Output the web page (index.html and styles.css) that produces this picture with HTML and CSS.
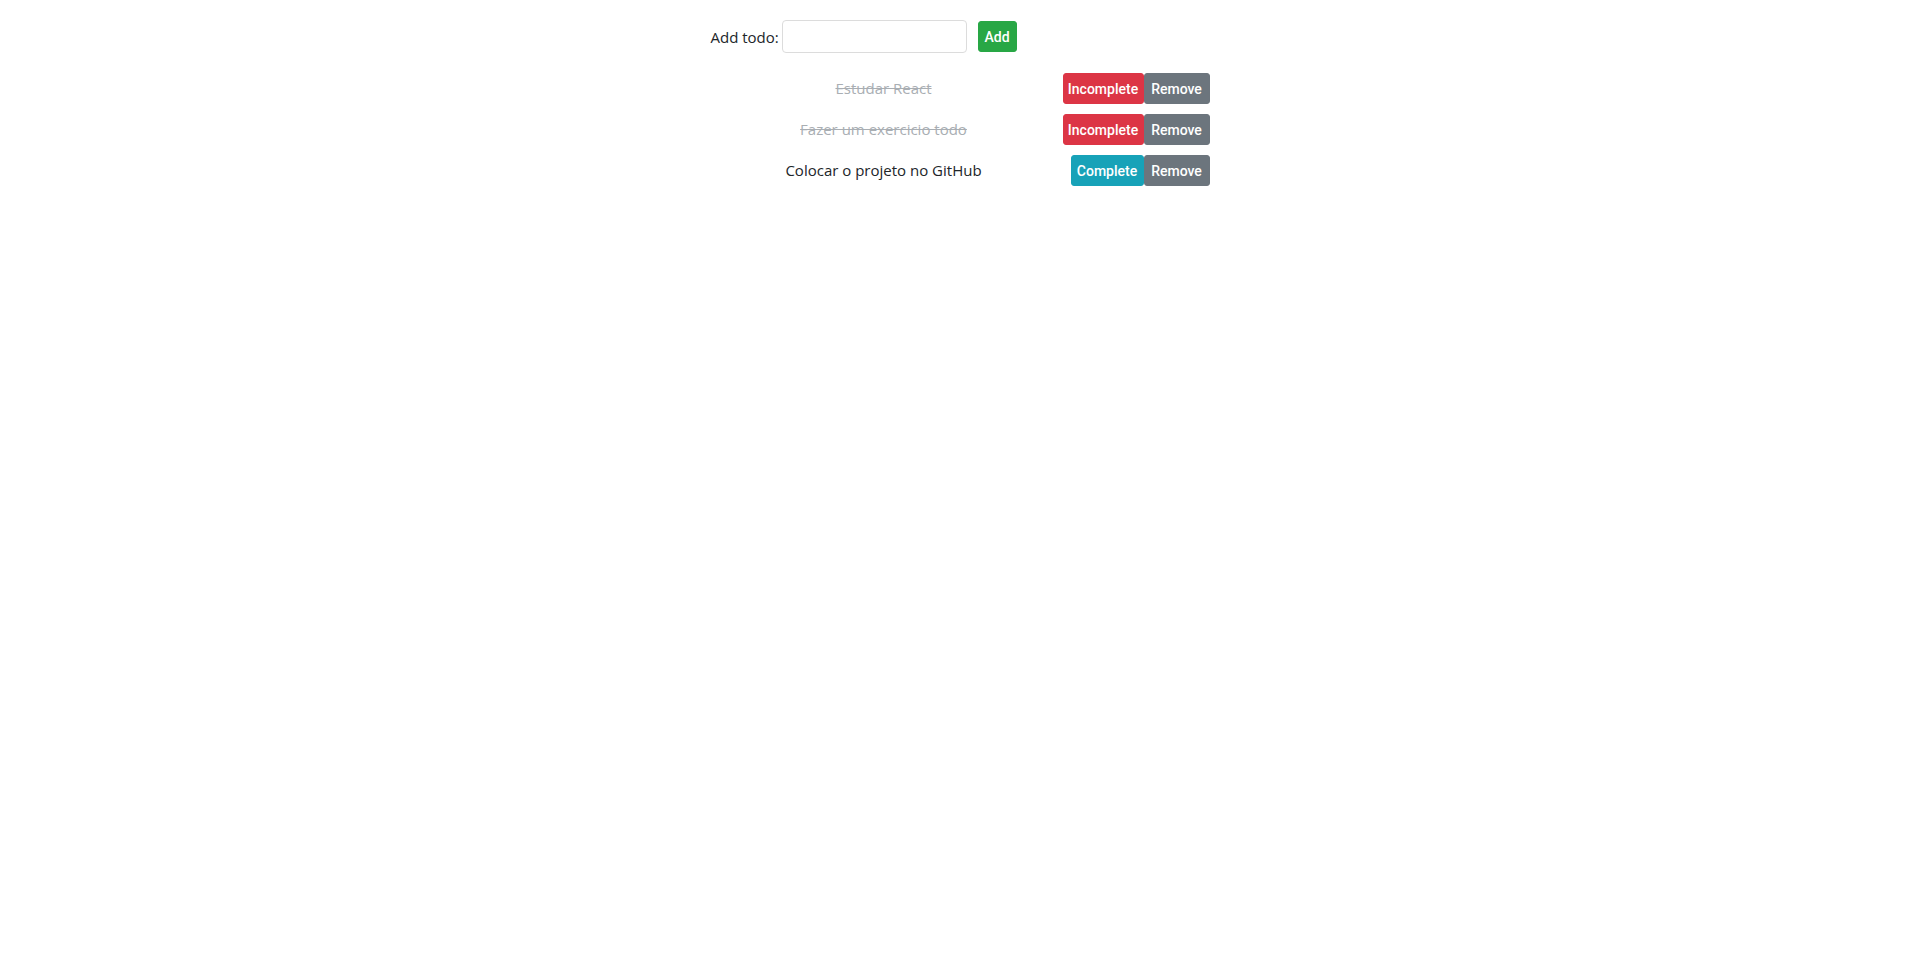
FILE: index.html
```html
<!DOCTYPE html>
<html lang="pt">
<head>
<meta charset="utf-8">
<title>Todo</title>
<link rel="stylesheet" href="styles.css">
</head>
<body>
<div class="app">
  <form class="add-form">
    <label class="add-label" for="todo">Add todo:</label>
    <input class="add-input" id="todo" type="text">
    <button type="button" class="btn btn-success add-btn">Add</button>
  </form>
  <div class="todo-list">
    <div class="todo-row">
      <span class="todo-text done">Estudar React</span>
      <div class="todo-actions">
        <button type="button" class="btn btn-danger">Incomplete</button>
        <button type="button" class="btn btn-secondary">Remove</button>
      </div>
    </div>
    <div class="todo-row">
      <span class="todo-text done">Fazer um exercicio todo</span>
      <div class="todo-actions">
        <button type="button" class="btn btn-danger">Incomplete</button>
        <button type="button" class="btn btn-secondary">Remove</button>
      </div>
    </div>
    <div class="todo-row">
      <span class="todo-text">Colocar o projeto no GitHub</span>
      <div class="todo-actions">
        <button type="button" class="btn btn-info">Complete</button>
        <button type="button" class="btn btn-secondary">Remove</button>
      </div>
    </div>
  </div>
</div>
</body>
</html>
```
FILE: styles.css
```css
html, body {
  margin: 0;
  padding: 0;
  background: #fff;
}
body {
  font-family: "Open Sans", "Noto Sans", sans-serif;
  font-size: 15px;
  color: #212529;
}
.app {
  width: 499px;
  margin: 0 auto;
  padding-top: 20px;
}
.add-form {
  display: flex;
  align-items: center;
  margin: 0;
}
.add-label {
  width: 71px;
  white-space: nowrap;
}
.add-input {
  box-sizing: border-box;
  width: 185px;
  height: 33px;
  margin: 0 11px 0 0;
  border: 1px solid #dcdcdc;
  border-radius: 4px;
  padding: 0 8px;
  font: inherit;
  outline: none;
}
.btn {
  box-sizing: border-box;
  height: 31px;
  margin: 0;
  padding: 0;
  border: 1px solid transparent;
  border-radius: 3px;
  font-family: Roboto, "Liberation Sans", sans-serif;
  font-size: 14px;
  font-weight: 500;
  color: #fff;
  cursor: pointer;
}
.btn-success { background: #28a745; border-color: #28a745; }
.btn-danger { background: #dc3545; border-color: #dc3545; }
.btn-secondary { background: #6c757d; border-color: #6c757d; }
.btn-info { background: #17a2b8; border-color: #17a2b8; }
.add-btn { width: 39px; }
.todo-list {
  display: flex;
  flex-direction: column;
  gap: 10px;
  margin-top: 20px;
}
.todo-row {
  display: grid;
  grid-template-columns: 346px 1fr;
  align-items: center;
}
.todo-text {
  text-align: center;
  line-height: 31px;
}
.todo-text.done {
  color: #a9aeb3;
  text-decoration: line-through;
}
.todo-actions {
  display: flex;
  justify-content: flex-end;
}
.todo-actions .btn-danger { width: 81px; }
.todo-actions .btn-info { width: 73px; }
.todo-actions .btn-secondary { width: 66px; }
```
